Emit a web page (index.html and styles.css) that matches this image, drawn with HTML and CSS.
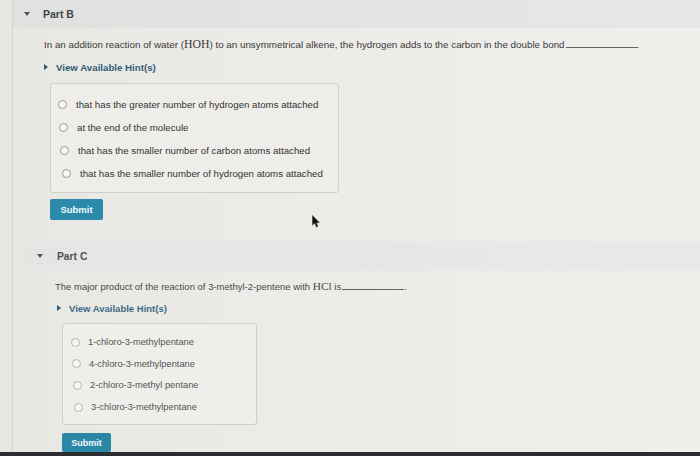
FILE: index.html
```html
<!DOCTYPE html>
<html>
<head>
<meta charset="utf-8">
<link rel="stylesheet" href="styles.css">
</head>
<body>
<div class="screen">
  <section class="part part-b">
    <div class="part-head"><span class="caret"></span><span class="part-title">Part B</span></div>
    <div class="part-body">
      <p class="question">In an addition reaction of water (<span class="math">HOH</span>) to an unsymmetrical alkene, the hydrogen adds to the carbon in the double bond<span class="blank"></span>.</p>
      <div class="hint"><span class="tri"></span>View Available Hint(s)</div>
      <div class="choices">
        <label class="choice"><span class="radio"></span><span>that has the greater number of hydrogen atoms attached</span></label>
        <label class="choice"><span class="radio"></span><span>at the end of the molecule</span></label>
        <label class="choice"><span class="radio"></span><span>that has the smaller number of carbon atoms attached</span></label>
        <label class="choice"><span class="radio"></span><span>that has the smaller number of hydrogen atoms attached</span></label>
      </div>
      <button class="submit">Submit</button>
    </div>
  </section>
  <section class="part part-c">
    <div class="part-head"><span class="caret"></span><span class="part-title">Part C</span></div>
    <div class="part-body">
      <p class="question">The major product of the reaction of 3-methyl-2-pentene with <span class="math">HCl</span> is<span class="blank"></span>.</p>
      <div class="hint"><span class="tri"></span>View Available Hint(s)</div>
      <div class="choices">
        <label class="choice"><span class="radio"></span><span>1-chloro-3-methylpentane</span></label>
        <label class="choice"><span class="radio"></span><span>4-chloro-3-methylpentane</span></label>
        <label class="choice"><span class="radio"></span><span>2-chloro-3-methyl pentane</span></label>
        <label class="choice"><span class="radio"></span><span>3-chloro-3-methylpentane</span></label>
      </div>
      <button class="submit">Submit</button>
    </div>
  </section>
  <svg class="cursor" width="8" height="13" viewBox="0 0 8 13"><path d="M0.5 0.5 L0.5 10 L2.8 8 L4.4 12 L5.8 11.4 L4.3 7.6 L7.3 7.6 Z" fill="#111" stroke="#333" stroke-width="0.5"/></svg>
</div>
<div class="bottom-bar"></div>
</body>
</html>
```
FILE: styles.css
```css
html, body {
  margin: 0;
  padding: 0;
}
body {
  width: 700px;
  height: 456px;
  overflow: hidden;
  background: linear-gradient(90deg, #e8e7e2 0%, #ecebe7 40%, #f0efec 100%);
  font-family: "Liberation Sans", Arial, sans-serif;
  color: #333;
}
.screen {
  position: relative;
  height: 452px;
  margin-left: 12px;
  border-left: 1px solid #d4d4cf;
  display: flex;
  flex-direction: column;
}
.part-head {
  display: flex;
  align-items: center;
  background: linear-gradient(90deg, #e0e2e2 0%, #e3e5e5 60%, #e6e7e6 100%);
}
.part-b .part-head {
  height: 28px;
  padding-left: 11px;
}
.part-c .part-head {
  height: 30px;
  margin-top: 21px;
  margin-left: 11px;
  padding-left: 13px;
  background: linear-gradient(90deg, #e4e5e4 0%, #e6e8e7 60%, #e9eae8 100%);
}
.caret {
  width: 0;
  height: 0;
  border-left: 3.5px solid transparent;
  border-right: 3.5px solid transparent;
  border-top: 4px solid #555;
}
.part-title {
  font-weight: bold;
  font-size: 10.5px;
  color: #444;
  margin-left: 13px;
}
.part-c .part-title { margin-left: 14px; color: #505050; font-size: 10.3px; }
.part-body {
  display: flex;
  flex-direction: column;
  align-items: flex-start;
}
.part-b .part-body { padding-left: 31px; }
.part-c .part-body { padding-left: 42px; }
.question {
  margin: 11px 0 0 0;
  font-size: 9.8px;
  line-height: 12px;
  color: #3a3a3a;
  white-space: nowrap;
}
.part-c .question { margin-top: 9px; font-size: 9.5px; color: #4a4a4a; }
.math {
  font-family: "Liberation Serif", "Times New Roman", serif;
  font-size: 1.2em;
}
.blank {
  display: inline-block;
  width: 71px;
  border-bottom: 1px solid #666;
  margin-left: 1px;
}
.part-c .blank { width: 62px; }
.hint {
  display: flex;
  align-items: center;
  margin-top: 10px;
  height: 12px;
  font-size: 9.7px;
  font-weight: bold;
  color: #2f5c78;
}
.part-c .hint { margin-top: 9px; margin-left: 2px; color: #3d6a86; font-size: 9.5px; }
.tri {
  width: 0;
  height: 0;
  border-top: 3.5px solid transparent;
  border-bottom: 3.5px solid transparent;
  border-left: 4px solid #2f5c78;
  margin-right: 8px;
}
.choices {
  box-sizing: border-box;
  display: flex;
  flex-direction: column;
  border: 1px solid #cfcfcb;
  border-radius: 3px;
  background: #eeede9;
}
.part-b .choices {
  margin: 10px 0 0 6px;
  width: 289px;
  height: 110px;
  padding: 14px 0 0 7px;
  gap: 11.3px;
}
.part-c .choices {
  margin: 9px 0 0 7px;
  width: 195px;
  height: 102px;
  padding: 12px 0 0 8px;
  gap: 9.7px;
  background: #efeeea;
}
.choice {
  display: flex;
  align-items: center;
  height: 12px;
  font-size: 9.7px;
  color: #333;
  white-space: nowrap;
}
.part-c .choice { font-size: 9.3px; color: #555; }
.choice:nth-child(2) { margin-left: 1px; }
.choice:nth-child(3) { margin-left: 2px; }
.choice:nth-child(4) { margin-left: 4px; }
.part-c .choice:nth-child(4) { margin-left: 3px; }
.radio {
  box-sizing: border-box;
  width: 9px;
  height: 9px;
  border: 1px solid #9a9a9a;
  border-radius: 50%;
  background: #f6f6f4;
  margin-right: 9px;
  flex: none;
}
.part-c .radio { border-color: #b4b4b2; margin-right: 8px; }
.submit {
  margin-top: 6px;
  margin-left: 6px;
  width: 53px;
  height: 21px;
  padding: 0;
  border: none;
  border-radius: 2px;
  background: #2b8aa9;
  color: #f2f8fa;
  font-family: "Liberation Sans", Arial, sans-serif;
  font-size: 9.5px;
  font-weight: bold;
}
.part-c .submit {
  margin-top: 8px;
  margin-left: 7px;
  width: 49px;
  height: 19px;
  font-size: 9px;
  background: #2a88a6;
}
.cursor {
  position: absolute;
  left: 299px;
  top: 215px;
}
.bottom-bar {
  height: 4px;
  background: #2b2d30;
}
```
